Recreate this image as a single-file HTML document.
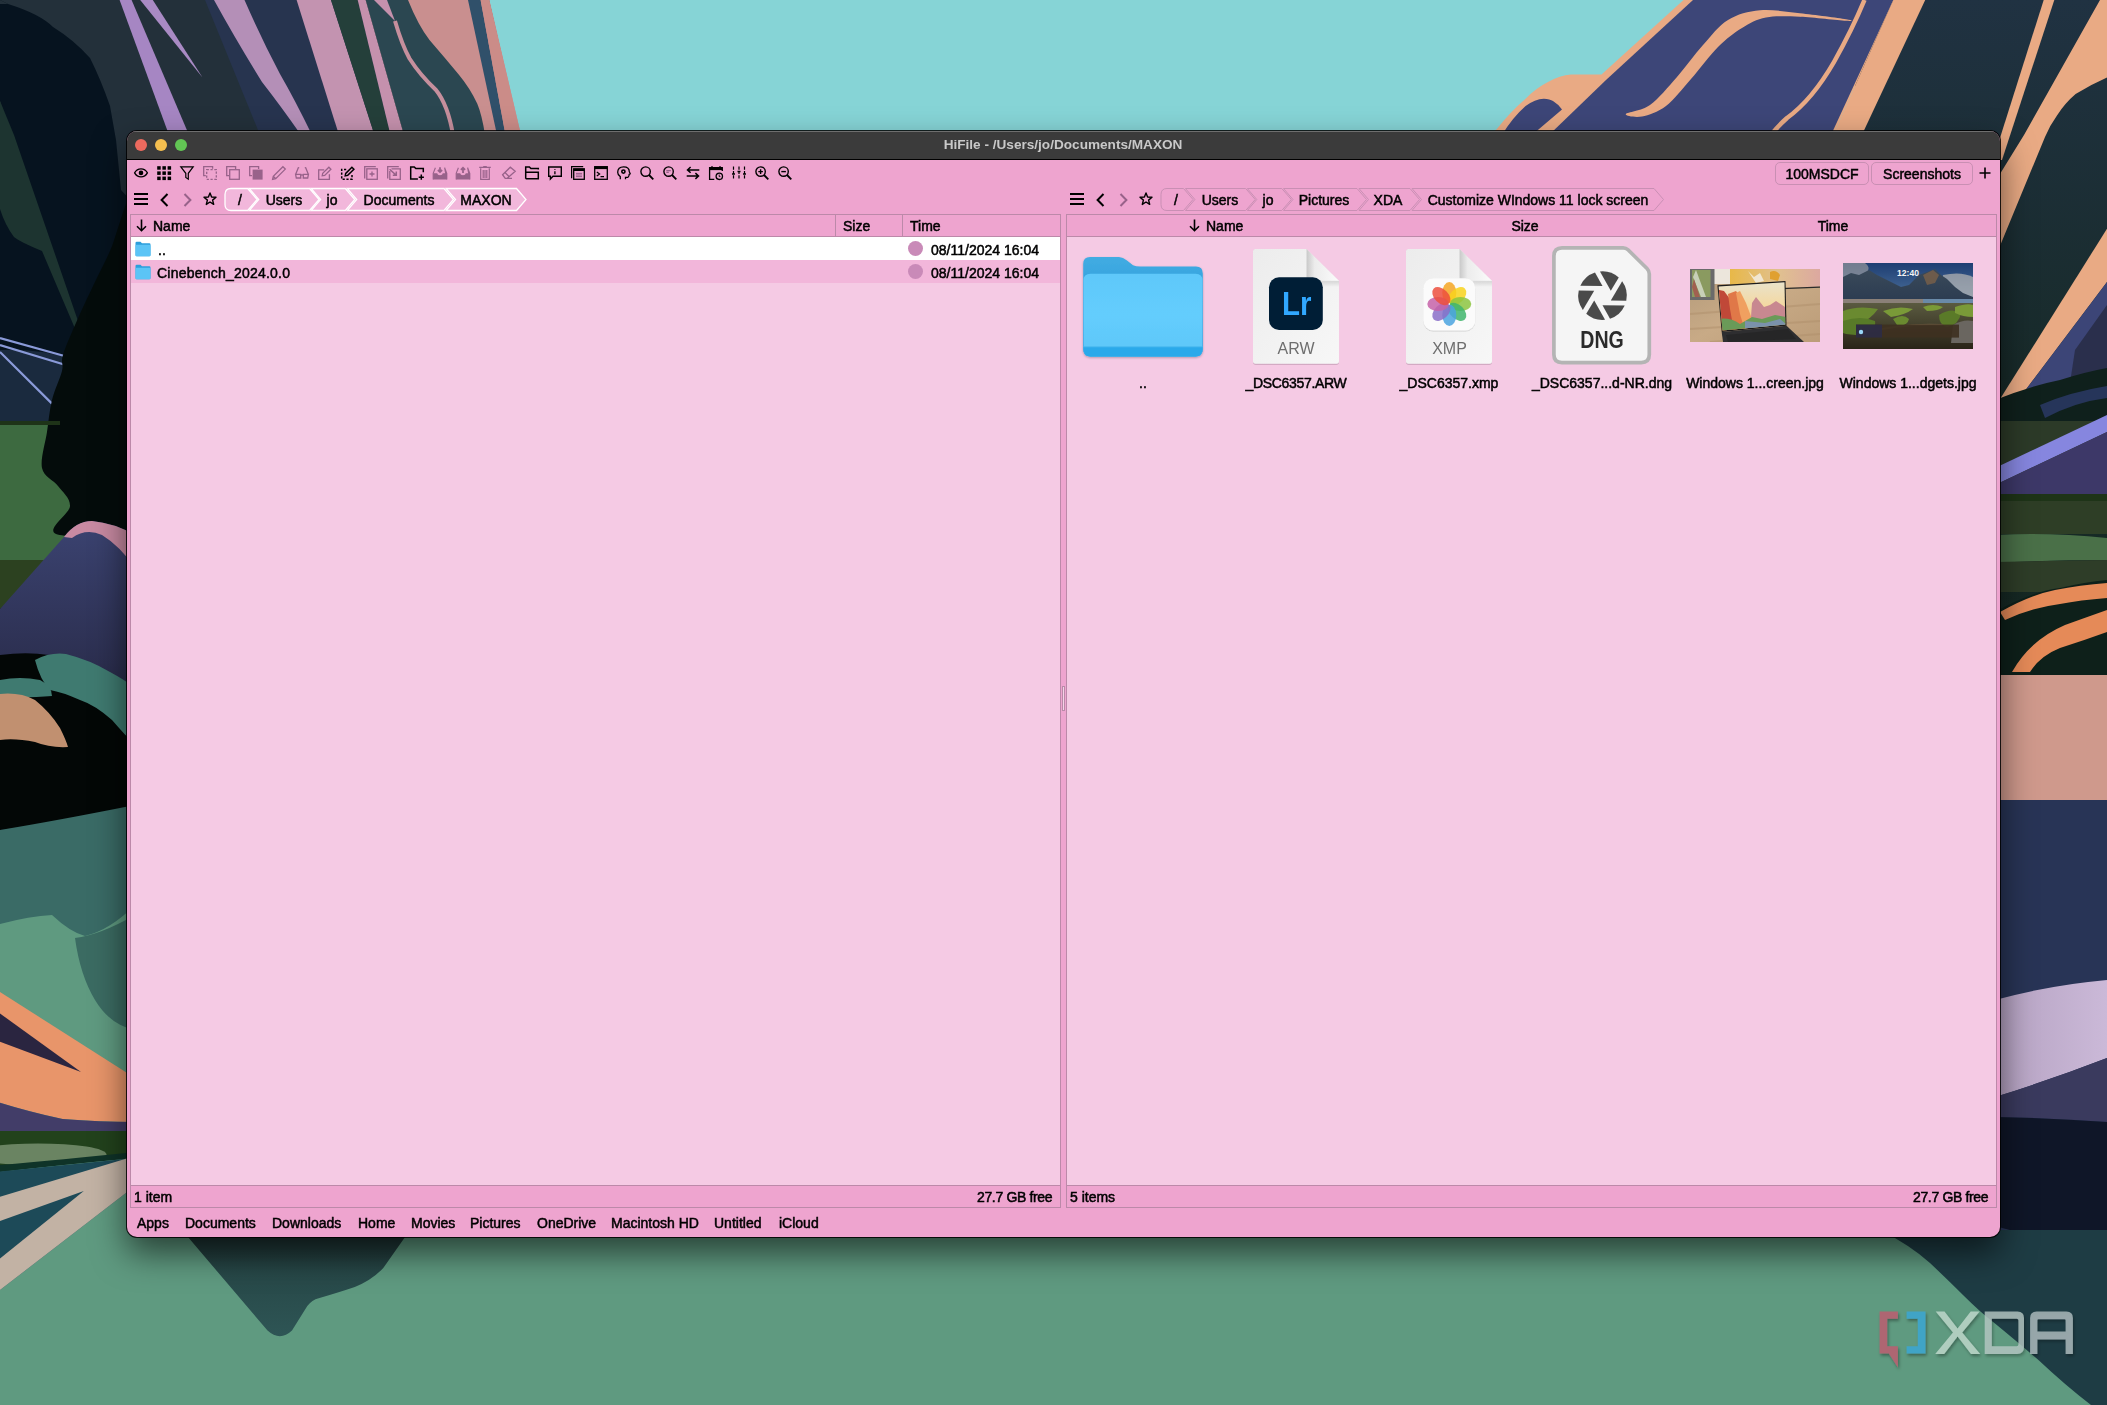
<!DOCTYPE html><html><head><meta charset="utf-8"><style>
*{margin:0;padding:0;box-sizing:border-box}
html,body{width:2107px;height:1405px;overflow:hidden;background:#5f9a80}
body{position:relative;font-family:"Liberation Sans",sans-serif;font-size:14px;color:#000}
.txt{position:absolute;white-space:nowrap;-webkit-text-stroke:0.5px currentColor;will-change:transform}
.a{position:absolute}
svg{position:absolute;overflow:visible}
</style></head><body>
<svg style="left:0;top:0" width="2107" height="1405" viewBox="0 0 2107 1405">
<defs>
<linearGradient id="mtn" x1="0" y1="0" x2="0" y2="1"><stop offset="0" stop-color="#3b4371"/><stop offset="0.55" stop-color="#2c2f50"/><stop offset="1" stop-color="#1a1828"/></linearGradient>
<linearGradient id="lens" x1="0" y1="0" x2="1" y2="0"><stop offset="0" stop-color="#b5a2c2"/><stop offset="1" stop-color="#cbb9d8"/></linearGradient>
<linearGradient id="rdark" x1="0" y1="0" x2="0" y2="1"><stop offset="0" stop-color="#203242"/><stop offset="0.6" stop-color="#172a27"/><stop offset="1" stop-color="#152822"/></linearGradient>
<linearGradient id="blob" x1="0" y1="0" x2="0" y2="1"><stop offset="0" stop-color="#1c2f2f"/><stop offset="0.4" stop-color="#274848"/><stop offset="1" stop-color="#2e5555"/></linearGradient>
<linearGradient id="shadowb" x1="0" y1="0" x2="0" y2="1"><stop offset="0" stop-color="#000" stop-opacity=".55"/><stop offset="0.35" stop-color="#000" stop-opacity=".25"/><stop offset="1" stop-color="#000" stop-opacity="0"/></linearGradient>
</defs>
<rect width="2107" height="1405" fill="#5f9a80"/>
<polygon points="0,0 2107,0 2107,135 0,135" fill="#86d4d6" />
<polygon points="0,0 135,0 135,1236 0,1236" fill="#06131f" />
<path d="M8 4Q40 14 53 27Q74 40 90 58Q101 80 110 106L116 140L121 190L135 205V0H489L520 135H135V0H0Z" fill="#23303a" />
<polygon points="0,0 8,4 0,4" fill="#23303a" />
<polygon points="205,0 489,0 520,135 260,135" fill="#27344f" />
<polygon points="0,101 13,140 0,140" fill="#1d302e" />
<polygon points="119.6,0 131.6,0 189,135 169,135" fill="#a686c3" />
<polygon points="140.2,0 152.8,0 202.7,77.7" fill="#a98ac4" />
<path d="M214 0H244.5Q262 40 280 74Q295 100 312 135H301Q280 105 262 82Q236 40 214 0Z" fill="#b48fb7" />
<polygon points="296.6,0 331,0 374.5,135 339,135" fill="#c393b0" />
<polygon points="331,0 357.7,0 390.5,135 374.5,135" fill="#243f3a" />
<polygon points="357.7,0 365.7,0 404,135 390.5,135" fill="#c591ad" />
<polygon points="365.7,0 489.3,0 521,135 404,135" fill="#c98f8f" />
<path d="M365.7 0H408Q418 25 429.5 40Q445 58 458.7 74.4Q470 88 477.3 103.7Q482 115 485 135H404Z" fill="#2b4751" />
<polygon points="374,0 387,0 395,21" fill="#c591ad" />
<path d="M395 21Q402 45 409.5 58.5Q420 75 436 90Q448 105 453 135" fill="none" stroke="#c68f9d" stroke-width="4"/>
<polygon points="468,0 480.6,0 505.5,135 497,135" fill="#30506a" />
<polygon points="480.6,0 489.3,0 521,135 505.5,135" fill="#cb8c88" />
<polygon points="1855,0 2107,0 2107,700 1995,700 1995,135 1855,135" fill="url(#rdark)" />
<path d="M1490 135L1496 130Q1510 112 1525.6 98.7Q1536 88 1548 82Q1560 75 1571 74.4H1601.5L1683.5 0H1893.3L1833.3 135Z" fill="#e9aa84" />
<polygon points="1549,135 1606,80 1693,0 1893.3,0 1831,135" fill="#3d4678" />
<path d="M1502 135Q1512 118 1525.6 106Q1535 99 1543.8 98.7Q1550 99 1553 101Q1558 104 1562 109.4L1532 135Z" fill="#3d4678" />
<path d="M1625.8 114.0C1627.1 112.1 1641.5 111.2 1650.0 105.0C1658.5 98.8 1668.2 87.0 1677.0 77.0C1685.8 67.0 1694.5 54.5 1703.0 45.0C1711.5 35.5 1718.5 25.8 1728.0 20.0C1737.5 14.2 1748.0 11.4 1760.0 10.3C1772.0 9.2 1785.7 11.7 1800.0 13.2C1814.3 14.7 1838.3 17.9 1846.0 19.2C1853.7 20.5 1853.7 21.2 1846.0 20.8C1838.3 20.4 1813.3 17.4 1800.0 16.8C1786.7 16.2 1775.7 15.6 1766.0 17.5C1756.3 19.4 1750.0 23.1 1742.0 28.0C1734.0 32.9 1726.5 38.5 1718.0 47.0C1709.5 55.5 1699.7 69.2 1691.0 79.0C1682.3 88.8 1674.2 99.8 1666.0 106.0C1657.8 112.2 1648.7 115.2 1642.0 116.5C1635.3 117.8 1624.5 115.9 1625.8 114.0Z" fill="#e9aa84" />
<path d="M1864.5 0Q1852 30 1834 62Q1812 100 1787 118Q1778 126 1771 135" fill="none" stroke="#e9aa84" stroke-width="4.5"/>
<polygon points="1893.3,0 1925.2,0 1859.5,140 1831,140" fill="#e9aa84" />
<polygon points="2043.7,0 2054.3,0 2002,160 1993,160" fill="#e9aa84" />
<path d="M2100 0H2107V77.5Q2090 85 2075.6 94Q2065 103 2057 115.4Q2050 125 2045 137L1995 258V182L2024 135Z" fill="#e9aa84" />
<polygon points="1995,407 2107,228.8 2107,282 2018,400 1995,430" fill="#e9aa84" />
<polygon points="2018,400 2107,282 2107,425 1995,425" fill="#3c4577" />
<polygon points="2075,350 2107,305 2107,410 2068,396" fill="#2a2f4c" />
<path d="M1995 400Q2030 386 2060 380Q2085 372 2107 368V425H1995Z" fill="#0f201c" />
<path d="M2040 405Q2070 392 2107 386V398Q2075 402 2045 418Z" fill="#26355a" />
<polygon points="1995,421 2107,421 2107,494 1995,494" fill="#2c3a28" />
<polygon points="1995,468 2107,415 2107,432 1995,485" fill="#8686df" />
<polygon points="1995,485 2107,432 2107,494 1995,494" fill="#3d3868" />
<polygon points="1995,494 2107,494 2107,501 1995,501" fill="#1e3418" />
<polygon points="1995,501 2107,501 2107,534 1995,534" fill="#2e3e26" />
<path d="M1995 535Q2050 532 2107 538V560Q2050 560 1995 563Z" fill="#4a7048" />
<polygon points="1995,562 2107,560 2107,592 1995,592" fill="#2e3d28" />
<path d="M1995 612Q2030 592 2060 588Q2085 582 2107 580V676H1995Z" fill="#0e201a" />
<path d="M2000 612Q2030 595 2055 590Q2080 585 2107 583V598Q2080 600 2060 604Q2030 608 2005 620Z" fill="#e58a58" />
<path d="M2012 672Q2030 640 2065 625Q2090 616 2107 610V632Q2085 640 2060 648Q2040 656 2030 672Z" fill="#e58a58" />
<polygon points="1995,675 2107,675 2107,800 1995,800" fill="#cf998c" />
<polygon points="1995,800 2107,800 2107,1250 1995,1250" fill="#283456" />
<path d="M1995 1000Q2050 985 2107 980V1058Q2050 1080 1995 1097Z" fill="url(#lens)" />
<path d="M1995 1097Q2050 1080 2107 1058V1122Q2050 1118 1995 1117Z" fill="#3a3a5e" />
<path d="M1995 1117Q2050 1118 2107 1122V1239Q2085 1242 2060 1241Q2030 1236 1995 1226Z" fill="#0f1628" />
<path d="M0 135H14L77.5 319.5L82 345L42 251Q20 242 14 237Q5 225 0 209Z" fill="#1d3430" />
<polygon points="0,101 14,135 0,135" fill="#1d3430" />
<path d="M0 350Q40 348 75 360L90 423H0Z" fill="#1a2a3e" />
<path d="M0 338L68 357M0 345L65.7 365M0 352L56 407.6" fill="none" stroke="#8a9ad8" stroke-width="2.2"/>
<polygon points="0,423 135,423 135,560 0,560" fill="#3d6a40" />
<path d="M135.0 195.0C133.7 196.2 129.8 196.5 127.0 202.0C124.2 207.5 120.8 219.8 118.0 228.0C115.2 236.2 114.0 241.7 110.0 251.0C106.0 260.3 99.4 272.6 94.0 284.0C88.6 295.4 82.7 307.7 77.5 319.5C72.3 331.3 65.6 346.4 63.0 355.0C60.4 363.6 63.8 363.5 62.0 371.0C60.2 378.5 54.5 389.8 52.0 400.0C49.5 410.2 48.7 420.7 47.0 432.0C45.3 443.3 40.2 459.0 42.0 468.0C43.8 477.0 53.3 479.7 58.0 486.0C62.7 492.3 70.3 498.0 70.0 506.0C69.7 514.0 45.2 529.3 56.0 534.0C66.8 538.7 121.8 534.0 135.0 534.0Z" fill="#040c0b" />
<polygon points="0,421 60,421 60,425 0,425" fill="#1e3318" />
<polygon points="0,560 66,560 0,609" fill="#2c4120" />
<path d="M0 609L64 537Q76 521 92 521Q114 523 135 535V780H0Z" fill="url(#mtn)" />
<path d="M64 537Q76 521 92 521Q114 523 135 535V568Q120 546 102 535Q86 528 72 538Z" fill="#c88aa2" />
<path d="M0 655Q40 650 70 660Q100 668 135 690V830Q60 820 0 830Z" fill="#030706" />
<path d="M35 660Q50 652 66 654Q90 660 110 672Q125 680 135 688V745Q125 735 112 720Q95 705 80 700Q62 692 50 690Q40 680 35 660Z" fill="#3f7a70" />
<path d="M0 680Q20 676 40 680Q52 686 52 696Q30 698 0 697Z" fill="#3f7a70" />
<path d="M0 694Q20 692 35 700Q50 712 60 728Q66 740 68 747Q50 748 35 742Q15 738 0 740Z" fill="#c19070" />
<path d="M0 830Q60 820 135 805V1000H0Z" fill="#3a6b66" />
<path d="M0 924Q30 916 52 915Q70 932 85 936Q110 930 135 905V1240H0Z" fill="#5f9a80" />
<path d="M75 938Q100 935 135 915V1030Q110 1025 95 1000Q80 975 75 938Z" fill="#3b6b62" />
<path d="M0 992L135 1078V1122Q100 1122 62.6 1119Q30 1112 0 1102.7Z" fill="#e8956a" />
<polygon points="0,1013.5 81,1072 0,1041.7" fill="#2a2540" />
<path d="M0 1102.7Q30 1112 62.6 1119Q100 1122 135 1122V1131H0Z" fill="#423d68" />
<polygon points="0,1131 135,1131 135,1156 0,1171.6" fill="#22421c" />
<ellipse cx="38" cy="1154.4" rx="68.5" ry="11" fill="#6a8462"/>
<path d="M0 1165Q60 1160 135 1152V1158Q60 1165 0 1172Z" fill="#0f3328" />
<polygon points="0,1171.6 135,1158 135,1186 0,1290" fill="#1d4a58" />
<polygon points="0,1196.7 135,1156 135,1186 0,1290" fill="#c2b2a4" />
<polygon points="0,1221 83.8,1191 0,1258.5" fill="#1d4a58" />
<path d="M182 1230L267.5 1330.6Q280 1342 292 1330.6L307.3 1306Q312 1300 318.7 1298.3Q340 1292 354.8 1287Q372 1280 383.3 1268L410 1230Z" fill="url(#blob)" />
<path d="M1880 1230Q1910 1245 1930 1263Q1950 1282 1963 1295Q1980 1312 1995 1323.6Q2015 1340 2039 1360.5Q2065 1385 2091 1405H2107V1230Z" fill="#1e3c44" />
</svg>
<div class="a" style="left:127px;top:131px;width:1873px;height:1106px;border-radius:10px;background:#eea4cf;box-shadow:0 0 0 1px rgba(0,0,0,.85),0 16px 34px rgba(0,0,0,.58);overflow:hidden">
<div class="a" style="left:0;top:0;width:1873px;height:29px;background:#3b3b3b;border-bottom:1px solid #000;box-shadow:inset 0 1px 0 #6e6e6e"></div>
</div>
<div class="a" style="left:134.8px;top:138.8px;width:12.4px;height:12.4px;border-radius:50%;background:#ed6a5e"></div>
<div class="a" style="left:154.8px;top:138.8px;width:12.4px;height:12.4px;border-radius:50%;background:#f5bf4f"></div>
<div class="a" style="left:174.8px;top:138.8px;width:12.4px;height:12.4px;border-radius:50%;background:#62c554"></div>
<div class="txt" style="left:863px;width:400px;text-align:center;top:136.82px;font-size:13.6px;font-weight:700;color:#c9c9c9;line-height:15.54px;-webkit-text-stroke:0">HiFile - /Users/jo/Documents/MAXON</div>
<div class="a" style="left:130px;top:214px;width:931px;height:994px;border:1px solid #bc89a9;background:#f5cae4"></div>
<div class="a" style="left:131px;top:215px;width:929px;height:22px;background:#eea4cf;border-bottom:1px solid #bc89a9"></div>
<div class="a" style="left:131px;top:1185px;width:929px;height:22px;background:#eea4cf;border-top:1px solid #bc89a9"></div>
<div class="a" style="left:1066px;top:214px;width:931px;height:994px;border:1px solid #bc89a9;background:#f5cae4"></div>
<div class="a" style="left:1067px;top:215px;width:929px;height:22px;background:#eea4cf;border-bottom:1px solid #bc89a9"></div>
<div class="a" style="left:1067px;top:1185px;width:929px;height:22px;background:#eea4cf;border-top:1px solid #bc89a9"></div>
<div class="a" style="left:1062.2px;top:686px;width:2.6px;height:24.6px;border:0.8px solid #b98aa8;background:#f6d3e8"></div>
<div class="a" style="left:835px;top:215px;width:1px;height:22px;background:#bc89a9"></div>
<div class="a" style="left:902px;top:215px;width:1px;height:22px;background:#bc89a9"></div>
<div class="a" style="left:131px;top:237px;width:929px;height:23px;background:#fff"></div>
<div class="a" style="left:131px;top:260px;width:929px;height:23px;background:#f2b6da"></div>
<div class="txt" style="left:152.5px;top:218.15px;font-size:14px;font-weight:400;color:#000;line-height:16.00px;">Name</div>
<div class="txt" style="left:843px;top:218.15px;font-size:14px;font-weight:400;color:#000;line-height:16.00px;">Size</div>
<div class="txt" style="left:910px;top:218.15px;font-size:14px;font-weight:400;color:#000;line-height:16.00px;">Time</div>
<div class="txt" style="left:1206px;top:218.15px;font-size:14px;font-weight:400;color:#000;line-height:16.00px;">Name</div>
<div class="txt" style="left:1325px;width:400px;text-align:center;top:218.15px;font-size:14px;font-weight:400;color:#000;line-height:16.00px;">Size</div>
<div class="txt" style="left:1633px;width:400px;text-align:center;top:218.15px;font-size:14px;font-weight:400;color:#000;line-height:16.00px;">Time</div>
<div class="txt" style="left:157.5px;top:241.65px;font-size:14px;font-weight:400;color:#000;line-height:16.00px;">..</div>
<div class="txt" style="left:157px;top:264.65px;font-size:14px;font-weight:400;color:#000;line-height:16.00px;letter-spacing:0.22px">Cinebench_2024.0.0</div>
<div class="a" style="left:908px;top:241.0px;width:15px;height:15px;border-radius:50%;background:#c98ab8"></div>
<div class="a" style="left:908px;top:264.0px;width:15px;height:15px;border-radius:50%;background:#c98ab8"></div>
<div class="txt" style="left:931px;top:241.65px;font-size:14px;font-weight:400;color:#000;line-height:16.00px;">08/11/2024 16:04</div>
<div class="txt" style="left:931px;top:264.65px;font-size:14px;font-weight:400;color:#000;line-height:16.00px;">08/11/2024 16:04</div>
<div class="txt" style="left:134px;top:1188.65px;font-size:14px;font-weight:400;color:#000;line-height:16.00px;">1 item</div>
<div class="txt" style="right:1054.7px;top:1188.65px;font-size:14px;font-weight:400;color:#000;line-height:16.00px;letter-spacing:-0.35px">27.7 GB free</div>
<div class="txt" style="left:1070px;top:1188.65px;font-size:14px;font-weight:400;color:#000;line-height:16.00px;">5 items</div>
<div class="txt" style="right:118.70000000000005px;top:1188.65px;font-size:14px;font-weight:400;color:#000;line-height:16.00px;letter-spacing:-0.35px">27.7 GB free</div>
<div class="txt" style="left:137.3px;top:1214.55px;font-size:14px;font-weight:400;color:#000;line-height:16.00px;">Apps</div>
<div class="txt" style="left:185.4px;top:1214.55px;font-size:14px;font-weight:400;color:#000;line-height:16.00px;">Documents</div>
<div class="txt" style="left:272px;top:1214.55px;font-size:14px;font-weight:400;color:#000;line-height:16.00px;">Downloads</div>
<div class="txt" style="left:357.6px;top:1214.55px;font-size:14px;font-weight:400;color:#000;line-height:16.00px;">Home</div>
<div class="txt" style="left:410.7px;top:1214.55px;font-size:14px;font-weight:400;color:#000;line-height:16.00px;">Movies</div>
<div class="txt" style="left:470.4px;top:1214.55px;font-size:14px;font-weight:400;color:#000;line-height:16.00px;">Pictures</div>
<div class="txt" style="left:536.9px;top:1214.55px;font-size:14px;font-weight:400;color:#000;line-height:16.00px;">OneDrive</div>
<div class="txt" style="left:610.9px;top:1214.55px;font-size:14px;font-weight:400;color:#000;line-height:16.00px;">Macintosh HD</div>
<div class="txt" style="left:714.3px;top:1214.55px;font-size:14px;font-weight:400;color:#000;line-height:16.00px;">Untitled</div>
<div class="txt" style="left:778.8px;top:1214.55px;font-size:14px;font-weight:400;color:#000;line-height:16.00px;">iCloud</div>
<div class="a" style="left:1775px;top:162px;width:94px;height:23px;border:1px solid #c98fb3;border-radius:5px"></div>
<div class="a" style="left:1871px;top:162px;width:102px;height:23px;border:1px solid #c98fb3;border-radius:5px"></div>
<div class="txt" style="left:1622px;width:400px;text-align:center;top:165.65px;font-size:14px;font-weight:400;color:#000;line-height:16.00px;">100MSDCF</div>
<div class="txt" style="left:1722px;width:400px;text-align:center;top:165.65px;font-size:14px;font-weight:400;color:#000;line-height:16.00px;">Screenshots</div>
<svg class="a" style="left:1979px;top:167px" width="12" height="12" viewBox="0 0 12 12"><path d="M6 0.5V11.5M0.5 6H11.5" stroke="#000" stroke-width="1.6"/></svg>
<svg style="left:134px;top:166px" width="14" height="14" viewBox="0 0 14 14"><path d="M0.6 6.9C3.5 1.6 10.5 1.6 13.4 6.9C10.5 12.2 3.5 12.2 0.6 6.9Z" fill="none" stroke-width="1.3" stroke="#000"/><circle cx="7" cy="6.9" r="2.3" fill="#000"/></svg>
<svg style="left:157px;top:166px" width="14" height="14" viewBox="0 0 14 14"><rect x="0.2" y="0.2" width="3.5" height="3.5" fill="#000"/><rect x="0.2" y="5.4" width="3.5" height="3.5" fill="#000"/><rect x="0.2" y="10.6" width="3.5" height="3.5" fill="#000"/><rect x="5.4" y="0.2" width="3.5" height="3.5" fill="#000"/><rect x="5.4" y="5.4" width="3.5" height="3.5" fill="#000"/><rect x="5.4" y="10.6" width="3.5" height="3.5" fill="#000"/><rect x="10.6" y="0.2" width="3.5" height="3.5" fill="#000"/><rect x="10.6" y="5.4" width="3.5" height="3.5" fill="#000"/><rect x="10.6" y="10.6" width="3.5" height="3.5" fill="#000"/></svg>
<svg style="left:180px;top:166px" width="14" height="14" viewBox="0 0 14 14"><path d="M0.8 0.8H13.2L8.3 7.3V13.2L5.8 11.5V7.3Z" fill="none" stroke-width="1.2" stroke="#000" stroke-linejoin="miter"/></svg>
<svg style="left:203px;top:166px" width="14" height="14" viewBox="0 0 14 14"><path d="M9.6 2.8V0.7H0.7V9.6H2.8" fill="none" stroke-width="1.3" stroke="#98628a"/><rect x="3.7" y="3.7" width="9.6" height="9.6" fill="none" stroke-width="1.3" stroke="#98628a" stroke-dasharray="2.2 1.6"/></svg>
<svg style="left:226px;top:166px" width="14" height="14" viewBox="0 0 14 14"><path d="M9.6 3V0.7H0.7V9.6H3" fill="none" stroke-width="1.3" stroke="#98628a"/><rect x="3.7" y="3.7" width="9.6" height="9.6" fill="none" stroke-width="1.3" stroke="#98628a"/></svg>
<svg style="left:249px;top:166px" width="14" height="14" viewBox="0 0 14 14"><path d="M9.6 3V0.7H0.7V9.6H3" fill="none" stroke-width="1.3" stroke="#98628a"/><rect x="3.6" y="3.6" width="10" height="10" fill="#98628a"/></svg>
<svg style="left:272px;top:166px" width="14" height="14" viewBox="0 0 14 14"><path d="M0.6 13.4L1.3 10.3L10.9 0.7L13.3 3.1L3.7 12.7Z M1.3 10.3L3.7 12.7" fill="none" stroke-width="1.3" stroke="#98628a"/></svg>
<svg style="left:295px;top:166px" width="14" height="14" viewBox="0 0 14 14"><path d="M0.6 8.4H5.7V12H1.3Z M8.3 8.4H13.4L12.7 12H8.3Z M5.7 9.4Q7 8.5 8.3 9.4 M0.6 8.4L3.4 1.6 M13.4 8.4L10.6 1.6 M3.4 1.6H4.2 M10.6 1.6H9.8" fill="none" stroke-width="1.3" stroke="#98628a"/></svg>
<svg style="left:318px;top:166px" width="14" height="14" viewBox="0 0 14 14"><path d="M6.2 3.8H0.7V13.3H11.4V8.3" fill="none" stroke-width="1.3" stroke="#98628a"/><path d="M4.2 9.8L4.7 7.4L10.9 1.2L12.9 3.2L6.7 9.4Z" fill="none" stroke-width="1.3" stroke="#98628a"/></svg>
<svg style="left:341px;top:166px" width="14" height="14" viewBox="0 0 14 14"><path d="M5.2 3.4H0.7V13.2H11V9" fill="none" stroke-width="1.5" stroke="#000" stroke-dasharray="2.2 1.6"/><path d="M4.2 9.8L4.7 7.4L10.9 1.2L12.9 3.2L6.7 9.4Z" fill="none" stroke-width="1.5" stroke="#000"/></svg>
<svg style="left:364px;top:166px" width="14" height="14" viewBox="0 0 14 14"><path d="M11.8 0.7H0.7V12.5" fill="none" stroke-width="1.3" stroke="#98628a"/><rect x="2.8" y="2.8" width="10.5" height="10.5" fill="none" stroke-width="1.3" stroke="#98628a"/><path d="M8 5.5V10.5M5.5 8H10.5" fill="none" stroke-width="1.3" stroke="#98628a"/></svg>
<svg style="left:387px;top:166px" width="14" height="14" viewBox="0 0 14 14"><path d="M11.8 0.7H0.7V12.5" fill="none" stroke-width="1.3" stroke="#98628a"/><path d="M2.8 5V13.3H13.3V2.8H4.5" fill="none" stroke-width="1.3" stroke="#98628a"/><path d="M2.6 3.3L8.5 8.6M9.3 5.6V9.2H5.8" fill="none" stroke-width="1.5" stroke="#98628a"/></svg>
<svg style="left:410px;top:166px" width="14" height="14" viewBox="0 0 14 14"><path d="M7.9 13H0.7V1H4.3L5.8 2.6H13.3V6.2" fill="none" stroke-width="1.5" stroke="#000"/><path d="M11.3 8.6V13.8M8.7 11.2H13.9" fill="none" stroke-width="1.5" stroke="#000"/></svg>
<svg style="left:433px;top:166px" width="14" height="14" viewBox="0 0 14 14"><path d="M0.2 13.4V7.3L2.4 1.7M11.6 1.7L13.8 7.3V13.4Z" fill="none" stroke-width="1.1" stroke="#98628a"/><path d="M0.2 7.3H4.2Q4.4 9.3 7 9.3Q9.6 9.3 9.8 7.3H13.8V13.5H0.2Z" fill="#98628a"/><path d="M7 1.2V5.8M4.9 4L7 6.1L9.1 4" fill="none" stroke-width="1.8" stroke="#98628a"/></svg>
<svg style="left:456px;top:166px" width="14" height="14" viewBox="0 0 14 14"><path d="M0.2 13.4V7.3L2.4 1.7M11.6 1.7L13.8 7.3V13.4Z" fill="none" stroke-width="1.1" stroke="#98628a"/><path d="M0.2 7.3H4.2Q4.4 9.3 7 9.3Q9.6 9.3 9.8 7.3H13.8V13.5H0.2Z" fill="#98628a"/><path d="M7 7V1.9M4.9 3.9L7 1.8L9.1 3.9" fill="none" stroke-width="1.8" stroke="#98628a"/></svg>
<svg style="left:479px;top:166px" width="14" height="14" viewBox="0 0 14 14"><path d="M0.2 1.4H11.8M4.2 0.6H7.8M1.7 2.2V13.3H10.3V2.2M4.2 4V12M6 4V12M7.8 4V12" fill="none" stroke-width="1.2" stroke="#98628a"/></svg>
<svg style="left:502px;top:166px" width="14" height="14" viewBox="0 0 14 14"><path d="M0.6 8.7L8.3 1.2L13.2 5.2L5.3 12.3H3.2Z M3 6.5L6.7 10.2 M3.2 12.3H10" fill="none" stroke-width="1.3" stroke="#98628a"/></svg>
<svg style="left:525px;top:166px" width="14" height="14" viewBox="0 0 14 14"><path d="M0.7 12.8V1H4.4L5.9 2.6H13.3V3.6 M0.7 6.2H13.3V12.8H0.7" fill="none" stroke-width="1.5" stroke="#000"/></svg>
<svg style="left:548px;top:166px" width="14" height="14" viewBox="0 0 14 14"><path d="M0.7 1H13.3V10.2H5L2.4 12.9V10.2H0.7Z" fill="none" stroke-width="1.4" stroke="#000"/><path d="M6.9 3.2V3.9M6.9 5.2V8.2" stroke-width="1.3" stroke="#000"/></svg>
<svg style="left:571px;top:166px" width="14" height="14" viewBox="0 0 14 14"><path d="M12.2 0.6H0.6V12.2" fill="none" stroke-width="1.2" stroke="#000"/><rect x="2.7" y="2.8" width="10.6" height="10.5" fill="none" stroke-width="1.3" stroke="#000"/><rect x="2.7" y="2.8" width="10.6" height="2.2" fill="#000"/><path d="M5 7.4H11M5 9H11M5 10.6H11" stroke-width="1" stroke="#98628a"/></svg>
<svg style="left:594px;top:166px" width="14" height="14" viewBox="0 0 14 14"><rect x="0.7" y="0.7" width="12.6" height="12.6" fill="none" stroke-width="1.3" stroke="#000"/><rect x="0.7" y="0.7" width="12.6" height="2.4" fill="#000"/><path d="M2.8 6L5.6 8L2.8 10M6.5 10.6H10" fill="none" stroke-width="1.2" stroke="#000"/></svg>
<svg style="left:617px;top:166px" width="14" height="14" viewBox="0 0 14 14"><path d="M3.3 13.3V10.6Q0.7 9.1 0.7 6.2Q0.7 0.8 6.6 0.8Q12.3 0.8 12.3 5.7L13.2 7.8L12.2 8.3Q12.2 10.6 11 11.3H8.5V13.3" fill="none" stroke-width="1.3" stroke="#000"/><circle cx="6.4" cy="5.6" r="1.6" fill="none" stroke-width="1.6" stroke="#000"/></svg>
<svg style="left:640px;top:166px" width="14" height="14" viewBox="0 0 14 14"><circle cx="5.6" cy="5.6" r="4.7" fill="none" stroke-width="1.4" stroke="#000"/><path d="M9 9L13.3 13.3" stroke-width="1.8" stroke="#000"/></svg>
<svg style="left:663px;top:166px" width="14" height="14" viewBox="0 0 14 14"><circle cx="5.6" cy="5.6" r="4.7" fill="none" stroke-width="1.4" stroke="#000"/><path d="M9 9L13.3 13.3" stroke-width="1.8" stroke="#000"/><path d="M3.3 4.6H7.8M3.3 6.4H5.8" stroke-width="1.2" stroke="#98628a"/></svg>
<svg style="left:686px;top:166px" width="14" height="14" viewBox="0 0 14 14"><path d="M13.3 3.9H1.5M4.6 1L1.5 3.9L4.6 6.8 M0.7 10H12.5M9.4 7.1L12.5 10L9.4 12.9" fill="none" stroke-width="1.5" stroke="#000"/></svg>
<svg style="left:709px;top:166px" width="14" height="14" viewBox="0 0 14 14"><path d="M5.3 13.3H0.6V1.6H13.3V5" fill="none" stroke-width="1.3" stroke="#000"/><rect x="0.6" y="1.6" width="12.7" height="2.5" fill="#000"/><path d="M3 0V2M11 0V2" stroke-width="1.2" stroke="#000"/><circle cx="10.3" cy="10.3" r="3.2" fill="none" stroke-width="1.3" stroke="#000"/><path d="M10.2 8.5V10.6H11.4" fill="none" stroke-width="0.9" stroke="#000"/></svg>
<svg style="left:732px;top:166px" width="14" height="14" viewBox="0 0 14 14"><path d="M1.5 0.5V13.5M7 0.5V13.5M12.5 0.5V13.5" stroke-width="1.2" stroke="#000" stroke-dasharray="3.2 1.2"/><path d="M0 8.1H3M5.5 5.4H8.5M11 8.1H14" stroke-width="1.5" stroke="#000"/></svg>
<svg style="left:755px;top:166px" width="14" height="14" viewBox="0 0 14 14"><circle cx="5.6" cy="5.6" r="4.7" fill="none" stroke-width="1.4" stroke="#000"/><path d="M9 9L13.3 13.3" stroke-width="1.8" stroke="#000"/><path d="M5.6 3.3V7.9M3.3 5.6H7.9" stroke-width="1.4" stroke="#000"/></svg>
<svg style="left:778px;top:166px" width="14" height="14" viewBox="0 0 14 14"><circle cx="5.6" cy="5.6" r="4.7" fill="none" stroke-width="1.4" stroke="#000"/><path d="M9 9L13.3 13.3" stroke-width="1.8" stroke="#000"/><path d="M3.3 5.6H7.9" stroke-width="1.4" stroke="#000"/></svg>
<svg style="left:134px;top:193px" width="14" height="12" viewBox="0 0 14 12"><path d="M0 1H14M0 6H14M0 11H14" stroke="#000" stroke-width="2"/></svg>
<svg style="left:160px;top:192.5px" width="9" height="14" viewBox="0 0 9 14"><path d="M7.5 1L1.6 7L7.5 13" fill="none" stroke="#000" stroke-width="2"/></svg>
<svg style="left:183px;top:192.5px" width="9" height="14" viewBox="0 0 9 14"><path d="M1.5 1L7.4 7L1.5 13" fill="none" stroke="#98628a" stroke-width="2"/></svg>
<svg style="left:203px;top:192px" width="14" height="14" viewBox="0 0 14 14"><path d="M7 1L8.6 5.1L13 5.3L9.6 8.1L10.7 12.4L7 10L3.3 12.4L4.4 8.1L1 5.3L5.4 5.1Z" fill="none" stroke="#000" stroke-width="1.4" stroke-linejoin="round"/></svg>
<svg style="left:1070px;top:193px" width="14" height="12" viewBox="0 0 14 12"><path d="M0 1H14M0 6H14M0 11H14" stroke="#000" stroke-width="2"/></svg>
<svg style="left:1096px;top:192.5px" width="9" height="14" viewBox="0 0 9 14"><path d="M7.5 1L1.6 7L7.5 13" fill="none" stroke="#000" stroke-width="2"/></svg>
<svg style="left:1119px;top:192.5px" width="9" height="14" viewBox="0 0 9 14"><path d="M1.5 1L7.4 7L1.5 13" fill="none" stroke="#98628a" stroke-width="2"/></svg>
<svg style="left:1139px;top:192px" width="14" height="14" viewBox="0 0 14 14"><path d="M7 1L8.6 5.1L13 5.3L9.6 8.1L10.7 12.4L7 10L3.3 12.4L4.4 8.1L1 5.3L5.4 5.1Z" fill="none" stroke="#000" stroke-width="1.4" stroke-linejoin="round"/></svg>
<svg style="left:136px;top:219px" width="11" height="13" viewBox="0 0 11 13"><path d="M5.5 0.5V11.5M1 7.2L5.5 11.7L10 7.2" fill="none" stroke="#000" stroke-width="1.6"/></svg>
<svg style="left:1189px;top:219px" width="11" height="13" viewBox="0 0 11 13"><path d="M5.5 0.5V11.5M1 7.2L5.5 11.7L10 7.2" fill="none" stroke="#000" stroke-width="1.6"/></svg>
<svg style="left:0;top:0" width="2107" height="300" viewBox="0 0 2107 300"><path d="M231 188.5H247.7L257.2 199.5L247.7 210.5H231Q225 210.5 225 204.5V194.5Q225 188.5 231 188.5Z" fill="#f2b7db" stroke="#ffffff" stroke-width="1.3"/><path d="M249.2 188.5H309.6L319.1 199.5L309.6 210.5H249.2L258.7 199.5Z" fill="#f2b7db" stroke="#ffffff" stroke-width="1.3"/><path d="M311.1 188.5H345.3L354.8 199.5L345.3 210.5H311.1L320.6 199.5Z" fill="#f2b7db" stroke="#ffffff" stroke-width="1.3"/><path d="M347.2 188.5H444L453.5 199.5L444 210.5H347.2L356.7 199.5Z" fill="#f2b7db" stroke="#ffffff" stroke-width="1.3"/><path d="M446 188.5H516.5L526.0 199.5L516.5 210.5H446L455.5 199.5Z" fill="#f2b7db" stroke="#ffffff" stroke-width="1.3"/></svg>
<svg style="left:0;top:0" width="2107" height="300" viewBox="0 0 2107 300"><path d="M1167 188.5H1183.5L1193.0 199.5L1183.5 210.5H1167Q1161 210.5 1161 204.5V194.5Q1161 188.5 1167 188.5Z" fill="none" stroke="#c98fb4" stroke-width="1"/><path d="M1185.4 188.5H1245.7L1255.2 199.5L1245.7 210.5H1185.4L1194.9 199.5Z" fill="none" stroke="#c98fb4" stroke-width="1"/><path d="M1247.3 188.5H1281.8L1291.3 199.5L1281.8 210.5H1247.3L1256.8 199.5Z" fill="none" stroke="#c98fb4" stroke-width="1"/><path d="M1283.5 188.5H1357L1366.5 199.5L1357 210.5H1283.5L1293.0 199.5Z" fill="none" stroke="#c98fb4" stroke-width="1"/><path d="M1359 188.5H1410L1419.5 199.5L1410 210.5H1359L1368.5 199.5Z" fill="none" stroke="#c98fb4" stroke-width="1"/><path d="M1412 188.5H1654L1663.5 199.5L1654 210.5H1412L1421.5 199.5Z" fill="none" stroke="#c98fb4" stroke-width="1"/></svg>
<div class="txt" style="left:40px;width:400px;text-align:center;top:192.15px;font-size:14px;font-weight:400;color:#000;line-height:16.00px;">/</div>
<div class="txt" style="left:83.60000000000002px;width:400px;text-align:center;top:192.15px;font-size:14px;font-weight:400;color:#000;line-height:16.00px;">Users</div>
<div class="txt" style="left:132px;width:400px;text-align:center;top:192.15px;font-size:14px;font-weight:400;color:#000;line-height:16.00px;">jo</div>
<div class="txt" style="left:199px;width:400px;text-align:center;top:192.15px;font-size:14px;font-weight:400;color:#000;line-height:16.00px;">Documents</div>
<div class="txt" style="left:286px;width:400px;text-align:center;top:192.15px;font-size:14px;font-weight:400;color:#000;line-height:16.00px;">MAXON</div>
<div class="txt" style="left:976px;width:400px;text-align:center;top:192.15px;font-size:14px;font-weight:400;color:#000;line-height:16.00px;">/</div>
<div class="txt" style="left:1019.5px;width:400px;text-align:center;top:192.15px;font-size:14px;font-weight:400;color:#000;line-height:16.00px;">Users</div>
<div class="txt" style="left:1068px;width:400px;text-align:center;top:192.15px;font-size:14px;font-weight:400;color:#000;line-height:16.00px;">jo</div>
<div class="txt" style="left:1124px;width:400px;text-align:center;top:192.15px;font-size:14px;font-weight:400;color:#000;line-height:16.00px;">Pictures</div>
<div class="txt" style="left:1188px;width:400px;text-align:center;top:192.15px;font-size:14px;font-weight:400;color:#000;line-height:16.00px;">XDA</div>
<div class="txt" style="left:1338px;width:400px;text-align:center;top:192.15px;font-size:14px;font-weight:400;color:#000;line-height:16.00px;">Customize WIndows 11 lock screen</div>
<svg style="left:134.5px;top:241px" width="16" height="16" viewBox="0 0 16 16"><path d="M0.5 2Q0.5 0.8 1.7 0.8H5.5L7 2.3H14.3Q15.5 2.3 15.5 3.5V14Q15.5 15.2 14.3 15.2H1.7Q0.5 15.2 0.5 14Z" fill="#2c9fdc"/><path d="M0.5 5Q0.5 3.8 1.7 3.8H14.3Q15.5 3.8 15.5 5V14Q15.5 15.2 14.3 15.2H1.7Q0.5 15.2 0.5 14Z" fill="#5bc4f6"/></svg>
<svg style="left:134.5px;top:264px" width="16" height="16" viewBox="0 0 16 16"><path d="M0.5 2Q0.5 0.8 1.7 0.8H5.5L7 2.3H14.3Q15.5 2.3 15.5 3.5V14Q15.5 15.2 14.3 15.2H1.7Q0.5 15.2 0.5 14Z" fill="#2c9fdc"/><path d="M0.5 5Q0.5 3.8 1.7 3.8H14.3Q15.5 3.8 15.5 5V14Q15.5 15.2 14.3 15.2H1.7Q0.5 15.2 0.5 14Z" fill="#5bc4f6"/></svg>
<svg style="left:1083px;top:257px;" width="120" height="100" viewBox="0 0 120 100"><defs>
<linearGradient id="fb" x1="0" y1="0" x2="0" y2="1"><stop offset="0" stop-color="#42ace2"/><stop offset="1" stop-color="#0f8ad6"/></linearGradient>
<linearGradient id="ff" x1="0" y1="0" x2="0" y2="1"><stop offset="0" stop-color="#5ec8fa"/><stop offset="0.5" stop-color="#64cdfd"/><stop offset="1" stop-color="#5cc6f8"/></linearGradient>
<filter id="fsh" x="-10%" y="-10%" width="120%" height="130%"><feDropShadow dx="0" dy="1" stdDeviation="0.8" flood-color="#000" flood-opacity=".25"/></filter>
</defs>
<g filter="url(#fsh)">
<path d="M0.2 7Q0.2 0 7 0H36Q40 0 44 3.5L50 8.2Q53 9.5 57 9.5H113Q119.8 9.5 119.8 16.5V92Q119.8 99.5 112.5 99.5H7.5Q0.2 99.5 0.2 92Z" fill="url(#fb)"/>
<path d="M0.5 23.5Q0.5 16.8 7.5 16.8H112.5Q119.5 16.8 119.5 23.5V92Q119.5 99.5 112.5 99.5H7.5Q0.5 99.5 0.5 92Z" fill="url(#ff)"/>
<path d="M0.5 89.5H119.5V92Q119.5 99.5 112.5 99.5H7.5Q0.5 99.5 0.5 92Z" fill="#2ba9ea"/>
<rect x="0.5" y="89" width="119" height="1.2" fill="#4dbcf2"/>
</g></svg>
<svg style="left:1253px;top:248.8px;" width="86" height="116" viewBox="0 0 86 116"><defs>
<linearGradient id="pg1253" x1="0" y1="0" x2="1" y2="1"><stop offset="0" stop-color="#ececec"/><stop offset="1" stop-color="#f7f7f7"/></linearGradient>
<linearGradient id="fold1253" x1="0" y1="0" x2="1" y2="0"><stop offset="0" stop-color="#c8c8c8"/><stop offset="0.25" stop-color="#ececec"/><stop offset="1" stop-color="#fbfbfb"/></linearGradient><linearGradient id="fsh1253" x1="0" y1="0" x2="0" y2="1"><stop offset="0" stop-color="#000" stop-opacity=".12"/><stop offset="1" stop-color="#000" stop-opacity="0"/></linearGradient>
<filter id="ds1253" x="-10%" y="-10%" width="120%" height="120%"><feDropShadow dx="0" dy="0.8" stdDeviation="0.6" flood-color="#5a3050" flood-opacity=".35"/></filter>
</defs>
<g filter="url(#ds1253)">
<path d="M2.5 0H53.5L86 32V112Q86 114.7 83.5 114.7H2.5Q0 114.7 0 112V2.5Q0 0 2.5 0Z" fill="url(#pg1253)"/>
</g>
<rect x="53.5" y="32" width="32.5" height="6" fill="url(#fsh1253)"/><path d="M53.5 0V28Q53.5 32 57.5 32H86Z" fill="url(#fold1253)"/>
<path d="M53.5 0V28Q53.5 32 57.5 32H86" fill="none" stroke="#e0e0e0" stroke-width="0.5"/>
<rect x="16" y="28.2" width="53.8" height="52.7" rx="10" fill="#001e36"/>
<text x="29" y="65.8" font-family="Liberation Sans" font-weight="700" font-size="34" fill="#31a8ff" textLength="29.5" lengthAdjust="spacingAndGlyphs">Lr</text>
<text x="43" y="105" text-anchor="middle" font-family="Liberation Sans" font-size="16.5" fill="#6e6e6e" textLength="37" lengthAdjust="spacingAndGlyphs">ARW</text></svg>
<svg style="left:1405.8px;top:248.8px;" width="86" height="116" viewBox="0 0 86 116"><defs>
<linearGradient id="pg1405.8" x1="0" y1="0" x2="1" y2="1"><stop offset="0" stop-color="#ececec"/><stop offset="1" stop-color="#f7f7f7"/></linearGradient>
<linearGradient id="fold1405.8" x1="0" y1="0" x2="1" y2="0"><stop offset="0" stop-color="#c8c8c8"/><stop offset="0.25" stop-color="#ececec"/><stop offset="1" stop-color="#fbfbfb"/></linearGradient><linearGradient id="fsh1405.8" x1="0" y1="0" x2="0" y2="1"><stop offset="0" stop-color="#000" stop-opacity=".12"/><stop offset="1" stop-color="#000" stop-opacity="0"/></linearGradient>
<filter id="ds1405.8" x="-10%" y="-10%" width="120%" height="120%"><feDropShadow dx="0" dy="0.8" stdDeviation="0.6" flood-color="#5a3050" flood-opacity=".35"/></filter>
</defs>
<g filter="url(#ds1405.8)">
<path d="M2.5 0H53.5L86 32V112Q86 114.7 83.5 114.7H2.5Q0 114.7 0 112V2.5Q0 0 2.5 0Z" fill="url(#pg1405.8)"/>
</g>
<rect x="53.5" y="32" width="32.5" height="6" fill="url(#fsh1405.8)"/><path d="M53.5 0V28Q53.5 32 57.5 32H86Z" fill="url(#fold1405.8)"/>
<path d="M53.5 0V28Q53.5 32 57.5 32H86" fill="none" stroke="#e0e0e0" stroke-width="0.5"/>
<defs><filter id="phs" x="-10%" y="-10%" width="120%" height="120%"><feDropShadow dx="0" dy="0.6" stdDeviation="0.7" flood-color="#000" flood-opacity=".25"/></filter></defs>
<rect x="17.2" y="29.2" width="52.2" height="52.2" rx="10" fill="#fbfbfb" filter="url(#phs)"/>
<ellipse cx="43.3" cy="43.8" rx="7" ry="10.8" fill="#f5a623" opacity="0.85" transform="rotate(0.0 43.3 55)"/><ellipse cx="43.3" cy="43.8" rx="7" ry="10.8" fill="#f8d21c" opacity="0.85" transform="rotate(45.0 43.3 55)"/><ellipse cx="43.3" cy="43.8" rx="7" ry="10.8" fill="#8cc43f" opacity="0.85" transform="rotate(90.0 43.3 55)"/><ellipse cx="43.3" cy="43.8" rx="7" ry="10.8" fill="#3fb56c" opacity="0.85" transform="rotate(135.0 43.3 55)"/><ellipse cx="43.3" cy="43.8" rx="7" ry="10.8" fill="#4aa3df" opacity="0.85" transform="rotate(180.0 43.3 55)"/><ellipse cx="43.3" cy="43.8" rx="7" ry="10.8" fill="#8a6fc8" opacity="0.85" transform="rotate(225.0 43.3 55)"/><ellipse cx="43.3" cy="43.8" rx="7" ry="10.8" fill="#c661a8" opacity="0.85" transform="rotate(270.0 43.3 55)"/><ellipse cx="43.3" cy="43.8" rx="7" ry="10.8" fill="#ec4f3d" opacity="0.85" transform="rotate(315.0 43.3 55)"/>
<circle cx="43.3" cy="55" r="0.8" fill="#fff"/>
<text x="43.5" y="105" text-anchor="middle" font-family="Liberation Sans" font-size="16.5" fill="#6e6e6e" textLength="34.7" lengthAdjust="spacingAndGlyphs">XMP</text></svg>
<svg style="left:1552.4px;top:246.2px;" width="100" height="122" viewBox="0 0 100 122"><path d="M10 1.8H71Q74 1.8 76 3.8L95 22.5Q97.3 24.8 97.3 28V108.5Q97.3 116.6 89.2 116.6H10Q1.9 116.6 1.9 108.5V10Q1.9 1.8 10 1.8Z" fill="#f5f5f5" stroke="#b4b4b4" stroke-width="3.7"/>
<path d="M28.30 39.72A24.3 24.3 0 0 1 42.99 26.49L50.50 40.00Z" fill="#4a4a4a"/><path d="M47.96 25.43A24.3 24.3 0 0 1 66.76 31.54L58.81 44.80Z" fill="#4a4a4a"/><path d="M70.16 35.32A24.3 24.3 0 0 1 74.27 54.65L58.81 54.40Z" fill="#4a4a4a"/><path d="M72.70 59.48A24.3 24.3 0 0 1 58.01 72.71L50.50 59.20Z" fill="#4a4a4a"/><path d="M53.04 73.77A24.3 24.3 0 0 1 34.24 67.66L42.19 54.40Z" fill="#4a4a4a"/><path d="M30.84 63.88A24.3 24.3 0 0 1 26.73 44.55L42.19 44.80Z" fill="#4a4a4a"/>
<text x="50" y="101.6" text-anchor="middle" font-family="Liberation Sans" font-weight="700" font-size="24.5" fill="#2a2a2a" textLength="43.5" lengthAdjust="spacingAndGlyphs">DNG</text></svg>
<svg style="left:1690.2px;top:269px;" width="130" height="73" viewBox="0 0 130 73"><defs>
<linearGradient id="wood" x1="0" y1="0" x2="1" y2="1"><stop offset="0" stop-color="#b39a7a"/><stop offset="0.5" stop-color="#c8aa86"/><stop offset="1" stop-color="#bb9c78"/></linearGradient>
<linearGradient id="sky1" x1="0" y1="0" x2="0" y2="1"><stop offset="0" stop-color="#e8e4d0"/><stop offset="0.5" stop-color="#f4d8a0"/><stop offset="1" stop-color="#f0b870"/></linearGradient>
<linearGradient id="post" x1="0" y1="0" x2="1" y2="0"><stop offset="0" stop-color="#e8b848"/><stop offset="0.55" stop-color="#e0c090"/><stop offset="1" stop-color="#dca8a0"/></linearGradient>
<clipPath id="c1"><rect width="130" height="73"/></clipPath>
<clipPath id="scrc"><path d="M28.6 17.5L94.5 13.3L95.3 55.5L32.5 61.5Z"/></clipPath>
</defs>
<g clip-path="url(#c1)">
<rect width="130" height="73" fill="url(#wood)"/>
<path d="M0 45L130 35M0 60L130 52M20 73L130 65" stroke="#b0906c" stroke-width="2" opacity=".5"/>
<rect x="22" y="0" width="24" height="15" fill="#ece6dc"/>
<path d="M40 0H130V17.5L40 21Z" fill="url(#post)"/>
<path d="M40 21L130 17.5V18.8L40 22.3Z" fill="#2a2a2a"/>
<path d="M58 2L64 8L70 4L74 12L66 14Z" fill="#f4f0e8" opacity=".8"/>
<path d="M80 3Q86 0 90 6L88 12L80 10Z" fill="#e0a030"/>
<rect x="0" y="0" width="24.5" height="31" fill="#6a6a6a"/>
<path d="M2 1H20.5V28H2Z" fill="#8a9a60"/>
<path d="M6 1L16 28H11L3 8Z" fill="#c8d0b8"/>
<path d="M4 10L10 28H5L2 18Z" fill="#a06050"/>
<path d="M27.4 16.3L95.5 12L96.5 56.8L31.7 63Z" fill="#1c1c1c"/>
<g clip-path="url(#scrc)">
<rect x="25" y="10" width="75" height="55" fill="url(#sky1)"/>
<path d="M25 20L34 22L40 30L44 45L50 62H25Z" fill="#c04838"/>
<path d="M38 25L46 22L52 30L58 45L60 62H44L40 40Z" fill="#e07848"/>
<path d="M46 24L50 22L56 34L62 50L55 62L50 45Z" fill="#f0a060"/>
<path d="M62 34L66 28L70 33L74 38L80 36L86 32L95 38V62H60Z" fill="#c88890"/>
<path d="M28 50Q40 48 50 55L62 48L72 50L85 46L96 48V62H28Z" fill="#6a9a58"/>
<path d="M55 52L75 54L90 50L96 55V62H55Z" fill="#8090c0" opacity=".8"/>
</g>
<path d="M31.7 63L96.5 56.8L114 73H33Z" fill="#2e2e30"/>
<path d="M36 66L98 60L106 70L38 73Z" fill="#222" opacity=".6"/>
</g></svg>
<svg style="left:1843.1px;top:262.9px;" width="130" height="86" viewBox="0 0 130 86"><defs>
<linearGradient id="sky2" x1="0" y1="0" x2="0" y2="1"><stop offset="0" stop-color="#1e3e72"/><stop offset="0.55" stop-color="#5a80aa"/><stop offset="1" stop-color="#a8b4b8"/></linearGradient>
<linearGradient id="mtn2" x1="0" y1="0" x2="0" y2="1"><stop offset="0" stop-color="#3a4a5a"/><stop offset="1" stop-color="#2a3a50"/></linearGradient>
<linearGradient id="dune" x1="0" y1="0" x2="0" y2="1"><stop offset="0" stop-color="#5a5a40"/><stop offset="1" stop-color="#2a2418"/></linearGradient>
<clipPath id="c2"><rect width="130" height="86"/></clipPath>
</defs>
<g clip-path="url(#c2)">
<rect width="130" height="86" fill="url(#sky2)"/>
<path d="M0 0H22Q30 6 20 12Q10 16 0 14Z" fill="#b8b0a8" opacity=".55"/>
<path d="M100 12Q118 8 130 14V34Q112 34 98 26Z" fill="#d0c8bc" opacity=".6"/>
<path d="M0 14L8 10L16 12L26 7L34 12L42 16L50 20L58 24L66 22L76 12L84 9L92 6L98 12L104 16L112 24L120 30L130 34V42H0Z" fill="url(#mtn2)"/>
<path d="M80 12L90 7L96 12L92 20L84 22Z" fill="#7a6048" opacity=".8"/>
<rect x="0" y="36" width="130" height="4" fill="#8a8078"/>
<path d="M80 36H130V40H80Z" fill="#6a8aa8"/>
<rect x="0" y="40" width="130" height="46" fill="url(#dune)"/>
<path d="M0 48Q15 42 35 46Q28 56 15 62Q5 64 0 62Z" fill="#6a8a30"/>
<path d="M0 58Q18 52 32 58Q34 68 20 72Q5 72 0 70Z" fill="#587a28"/>
<path d="M40 48Q55 42 70 46Q62 52 48 54Z" fill="#7a9a38"/>
<path d="M50 56Q60 50 66 56Q64 64 54 62Z" fill="#6a8a30"/>
<path d="M80 44Q90 40 100 44Q96 48 84 48Z" fill="#7a9a38"/>
<path d="M96 52Q108 44 118 50Q116 62 104 64Q96 62 96 52Z" fill="#5a7a28"/>
<path d="M112 44Q124 40 130 42V54Q120 54 112 50Z" fill="#7a9a38"/>
<path d="M110 62Q120 56 130 58V80H108Z" fill="#6a6660"/>
<path d="M20 70Q60 60 100 62" stroke="#6a5a40" stroke-width="2" fill="none"/>
<rect x="13" y="61.6" width="103" height="13" fill="#3e3020" opacity=".9"/>
<rect x="13" y="61.6" width="26" height="13" fill="#2c2c48" opacity=".85"/>
<circle cx="18" cy="69" r="2.2" fill="#9ad8f8"/>
<text x="65" y="13.2" text-anchor="middle" font-family="Liberation Sans" font-weight="700" font-size="8.6" fill="#f4f4f4">12:40</text>
</g></svg>
<div class="txt" style="left:943px;width:400px;text-align:center;top:374.65px;font-size:14px;font-weight:400;color:#000;line-height:16.00px;">..</div>
<div class="txt" style="left:1096px;width:400px;text-align:center;top:374.65px;font-size:14px;font-weight:400;color:#000;line-height:16.00px;letter-spacing:-0.33px">_DSC6357.ARW</div>
<div class="txt" style="left:1249px;width:400px;text-align:center;top:374.65px;font-size:14px;font-weight:400;color:#000;line-height:16.00px;">_DSC6357.xmp</div>
<div class="txt" style="left:1402px;width:400px;text-align:center;top:374.65px;font-size:14px;font-weight:400;color:#000;line-height:16.00px;">_DSC6357...d-NR.dng</div>
<div class="txt" style="left:1555px;width:400px;text-align:center;top:374.65px;font-size:14px;font-weight:400;color:#000;line-height:16.00px;">Windows 1...creen.jpg</div>
<div class="txt" style="left:1708px;width:400px;text-align:center;top:374.65px;font-size:14px;font-weight:400;color:#000;line-height:16.00px;">Windows 1...dgets.jpg</div>
<svg style="left:1878.6px;top:1311.7px;" width="200" height="60" viewBox="0 0 200 60"><defs><filter id="xsh" x="-10%" y="-10%" width="130%" height="140%"><feDropShadow dx="1.2" dy="2.2" stdDeviation="1.6" flood-color="#000" flood-opacity=".35"/></filter></defs>
<g filter="url(#xsh)">
<path d="M0.6 -0.5H18.9V6.7H8.2V34.2H18.9V55.6L9.8 41.4H0.6Z" fill="#ae6672"/>
<path d="M27.6 -0.5H46.5V41.4H27.6V34.2H38.8V6.7H27.6Z" fill="#40a4c6"/>
<path d="M56.7 -0.5H65.5L78.6 16.4L91.7 -0.5H100.6L83.2 20.6L101.2 41.9H92L78.6 24.6L65.2 41.9H56.2L74 20.6Z" fill="#b6d2c4" opacity=".92"/>
<path d="M105.7 -0.5H138.5Q145 -0.5 145 6V35Q145 41.9 138 41.9H105.7ZM112.8 6.7V34.2H137.8Q139.4 34.2 139.4 32.6V8.2Q139.4 6.7 137.9 6.7Z" fill="#b8cac6" opacity=".78" fill-rule="evenodd"/>
<path d="M151.1 41.9V6Q151.1 -0.5 157.6 -0.5H187.4Q193.9 -0.5 193.9 6V41.9H186.6V27.6H158.4V41.9ZM158.4 19.6H186.6V8.2Q186.6 7.2 185.6 7.2H159.4Q158.4 7.2 158.4 8.2Z" fill="#b0bec0" opacity=".8" fill-rule="evenodd"/>
</g></svg>
</body></html>
